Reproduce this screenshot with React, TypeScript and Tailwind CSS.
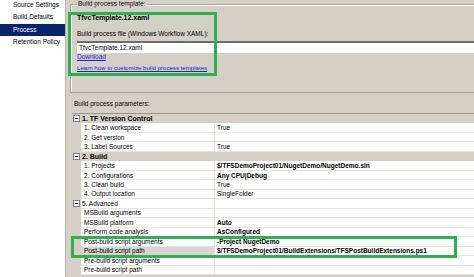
import React from 'react';

type Row = {
  kind: 'cat' | 'sub' | 'prop';
  name: string;
  value?: string;
  bold?: boolean;
  selected?: boolean;
};

const navItems = ['Source Settings', 'Build Defaults', 'Process', 'Retention Policy'];

const rows: Row[] = [
  { kind: 'cat', name: '1. TF Version Control' },
  { kind: 'prop', name: '1. Clean workspace', value: 'True' },
  { kind: 'prop', name: '2. Get version' },
  { kind: 'prop', name: '3. Label Sources', value: 'True' },
  { kind: 'cat', name: '2. Build' },
  { kind: 'prop', name: '1. Projects', value: '$/TFSDemoProject01/NugetDemo/NugetDemo.sln', bold: true },
  { kind: 'prop', name: '2. Configurations', value: 'Any CPU|Debug', bold: true },
  { kind: 'prop', name: '3. Clean build', value: 'True' },
  { kind: 'prop', name: '4. Output location', value: 'SingleFolder' },
  { kind: 'sub', name: '5. Advanced' },
  { kind: 'prop', name: 'MSBuild arguments' },
  { kind: 'prop', name: 'MSBuild platform', value: 'Auto', bold: true },
  { kind: 'prop', name: 'Perform code analysis', value: 'AsConfigured', bold: true },
  { kind: 'prop', name: 'Post-build script arguments', value: '-Project NugetDemo', bold: true },
  {
    kind: 'prop',
    name: 'Post-build script path',
    value: '$/TFSDemoProject01/BuildExtensions/TFSPostBuildExtensions.ps1',
    bold: true,
    selected: true,
  },
  { kind: 'prop', name: 'Pre-build script arguments' },
  { kind: 'prop', name: 'Pre-build script path' },
];

function Toggle() {
  return (
    <span className="flex h-[7px] w-[7px] items-center justify-center border border-[#7f7f7f] bg-white">
      <span className="h-px w-[3px] bg-black" />
    </span>
  );
}

function GridRow({ row }: { row: Row }) {
  if (row.kind === 'cat') {
    return (
      <div className="flex h-[9.48px] items-center bg-[#d4d0c8]">
        <div className="flex w-[9px] shrink-0 justify-center">
          <Toggle />
        </div>
        <span className="pl-[1px] pt-px text-[7px] font-bold">{row.name}</span>
      </div>
    );
  }
  if (row.kind === 'sub') {
    return (
      <div className="flex h-[9.48px] items-center">
        <div className="flex w-[9px] shrink-0 items-center justify-center self-stretch bg-[#d4d0c8]">
          <Toggle />
        </div>
        <div className="flex h-full w-[133px] shrink-0 items-center border-b border-[#e6e4de] bg-white pl-[1px] pt-px">
          {row.name}
        </div>
        <div className="h-full flex-1 border-b border-l border-[#e6e4de] bg-white" />
      </div>
    );
  }
  return (
    <div className="flex h-[9.48px]">
      <div className="w-[9px] shrink-0 bg-[#d4d0c8]" />
      <div
        className={`flex w-[133px] shrink-0 items-center border-b border-[#e6e4de] pl-[3px] pt-px ${
          row.selected ? 'bg-[#d8d5ce]' : 'bg-white'
        }`}
      >
        {row.name}
      </div>
      <div
        className={`flex flex-1 items-center whitespace-nowrap border-b border-l border-[#e6e4de] bg-white pl-[2px] pt-px ${
          row.bold ? 'font-bold' : ''
        }`}
      >
        {row.value}
      </div>
    </div>
  );
}

export default function App() {
  return (
    <div
      className="relative flex h-[277px] w-[474px] overflow-hidden bg-[#d4d0c8] text-[6.5px] leading-[8px] text-black"
      style={{ fontFamily: '"Liberation Sans", Arial, sans-serif' }}
    >
      {/* Left navigation */}
      <nav className="-mt-px w-[66px] shrink-0 border-r border-[#b5b2aa] bg-white">
        {navItems.map((item) => (
          <div
            key={item}
            className={`flex h-[12.3px] items-center pl-[13px] ${
              item === 'Process' ? 'bg-[#0a246a] text-white' : ''
            }`}
          >
            {item}
          </div>
        ))}
      </nav>

      {/* Process page */}
      <main className="flex min-w-0 flex-1 flex-col pl-[4px]">
        <fieldset className="h-[93px] shrink-0 border border-r-0 border-[#a7a39b] pl-[6px] shadow-[inset_1px_1px_0_#ffffff]">
          <legend className="px-[1px] leading-[8px]">Build process template:</legend>
          <div className="mt-[6px] h-[8px] text-[7px] font-bold">TfvcTemplate.12.xaml</div>
          <div className="mt-[8px] h-[8px]">Build process file (Windows Workflow XAML):</div>
          <div className="mt-[3px] flex h-[12px] items-center border-b border-t-2 border-b-white border-t-[#6b6b6b] bg-white pl-[2px]">
            TfvcTemplate.12.xaml
          </div>
          <div className="h-[8px] text-[#2020c8] underline">Download</div>
          <div className="mt-[3px] h-[8px] text-[6.1px] text-[#2020c8] underline">
            Learn how to customize build process templates
          </div>
        </fieldset>

        <div className="ml-[4px] mt-[7px] h-[8px]">Build process parameters:</div>

        <div className="ml-[2px] mt-[5px] border-t border-[#9a968e]">
          {rows.map((row) => (
            <GridRow key={row.name} row={row} />
          ))}
        </div>
      </main>

      {/* Annotation boxes */}
      <div className="pointer-events-none absolute left-[68px] top-[12px] h-[64px] w-[149px] border-[3px] border-[#2eb04f]" />
      <div className="pointer-events-none absolute left-[71px] top-[236px] h-[22px] w-[386px] border-[3px] border-[#2eb04f]" />
    </div>
  );
}
